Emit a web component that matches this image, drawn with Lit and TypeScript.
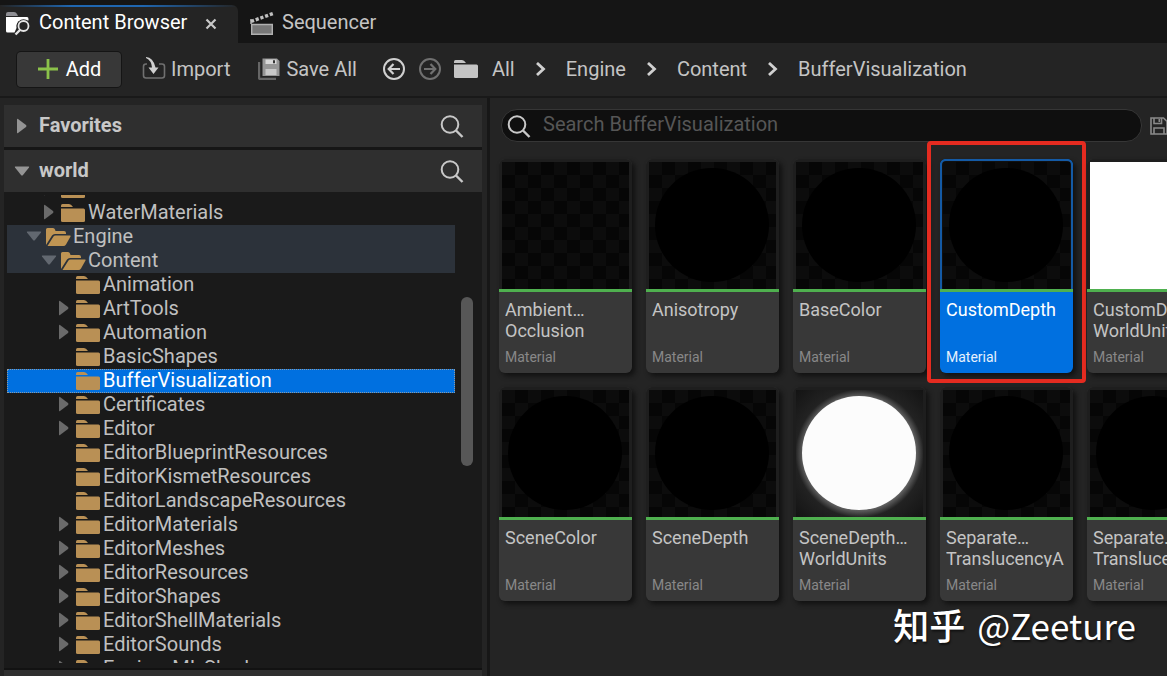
import { LitElement, html, css, svg, nothing } from "lit";
import { customElement, property } from "lit/decorators.js";
import { classMap } from "lit/directives/class-map.js";
import { styleMap } from "lit/directives/style-map.js";

type TreeNode = { name: string; level: number; arrow?: "open" | "closed"; state?: "path" | "selected" };
type Asset = { lines: string[]; thumb: "empty" | "black" | "glow" | "white"; selected?: boolean };

const TREE: TreeNode[] = [
  { name: "Water", level: 2, arrow: "closed" },
  { name: "WaterMaterials", level: 2, arrow: "closed" },
  { name: "Engine", level: 1, arrow: "open", state: "path" },
  { name: "Content", level: 2, arrow: "open", state: "path" },
  { name: "Animation", level: 3 },
  { name: "ArtTools", level: 3, arrow: "closed" },
  { name: "Automation", level: 3, arrow: "closed" },
  { name: "BasicShapes", level: 3 },
  { name: "BufferVisualization", level: 3, state: "selected" },
  { name: "Certificates", level: 3, arrow: "closed" },
  { name: "Editor", level: 3, arrow: "closed" },
  { name: "EditorBlueprintResources", level: 3 },
  { name: "EditorKismetResources", level: 3 },
  { name: "EditorLandscapeResources", level: 3 },
  { name: "EditorMaterials", level: 3, arrow: "closed" },
  { name: "EditorMeshes", level: 3, arrow: "closed" },
  { name: "EditorResources", level: 3, arrow: "closed" },
  { name: "EditorShapes", level: 3, arrow: "closed" },
  { name: "EditorShellMaterials", level: 3, arrow: "closed" },
  { name: "EditorSounds", level: 3, arrow: "closed" },
  { name: "Engine_MI_Shaders", level: 3, arrow: "closed" },
];

const ASSETS: Asset[] = [
  { lines: ["Ambient…", "Occlusion"], thumb: "empty" },
  { lines: ["Anisotropy"], thumb: "black" },
  { lines: ["BaseColor"], thumb: "black" },
  { lines: ["CustomDepth"], thumb: "black", selected: true },
  { lines: ["CustomDepth…", "WorldUnits"], thumb: "white" },
  { lines: ["SceneColor"], thumb: "black" },
  { lines: ["SceneDepth"], thumb: "black" },
  { lines: ["SceneDepth…", "WorldUnits"], thumb: "glow" },
  { lines: ["Separate…", "TranslucencyA"], thumb: "black" },
  { lines: ["Separate…", "TranslucencyR"], thumb: "black" },
];

const icon = (w: number, h: number, body: unknown) =>
  html`<svg width=${w} height=${h} viewBox="0 0 ${w} ${h}" fill="none" aria-hidden="true">${body}</svg>`;

const searchIcon = () =>
  icon(24, 24, svg`<circle cx="10" cy="10.500" r="8.300" stroke="#c8c8c8" stroke-width="2"/><path d="M16 16.500 22.500 23" stroke="#c8c8c8" stroke-width="2.400"/>`);

const arrowRight = (fill: string) =>
  icon(16, 16, svg`<path d="M3 1.500Q3 .3 4 1L12 7Q13 8 12 9L4 15Q3 15.700 3 14.500Z" fill=${fill}/>`);
const arrowDown = (fill: string) =>
  icon(16, 16, svg`<path d="M1.500 3.500H14.500Q15.700 3.500 15 4.600L9 12Q8 13.200 7 12L1 4.600Q.3 3.500 1.500 3.500Z" fill=${fill}/>`);

const folder = (fill: string) =>
  icon(24, 18, svg`<path d="M0 3V1.500Q0 0 1.500 0H8Q10 0 12 3Z" fill=${fill}/><path d="M0 4.500H22.500Q24 4.500 24 6V16.500Q24 18 22.500 18H1.500Q0 18 0 16.500Z" fill=${fill}/>`);
const folderOpen = () =>
  icon(25, 18, svg`<path d="M0 17V1.500Q0 0 1.500 0H7Q8.500 0 9 1.500L9.500 3H18Q20 3 20 5V6H9Q7 6 6 7.500Z" fill="#c09553"/><path d="M1.500 18 7.500 8.500Q8 7.500 9.500 7.500H24Q25 7.500 24.500 8.500L20 16.500Q19 18 17.500 18Z" fill="#c09553"/>`);

const tabFolder = () =>
  icon(26, 24, svg`<path d="M1 4V2Q1 0 3 0H9Q11 0 12 2L13 4Z" fill="#8e8e93"/><path d="M1 5H22Q23.500 5 23.500 7V8.500H16Q10.500 10 11.500 16L9.500 20.500H2.500Q1 20.500 1 19Z" fill="#fff"/><circle cx="18.500" cy="14" r="6.800" fill="#242424"/><circle cx="18.500" cy="14" r="5" stroke="#e4e4e4" stroke-width="1.800"/><path d="M15 18 10.500 22.500" stroke="#e4e4e4" stroke-width="2.400"/>`);
const clapper = () =>
  icon(24, 24, svg`<path d="M1.700 12.500H22.300V22.300H1.700Z" fill="#777" stroke="#b0b0b0" stroke-width="1.400"/><path d="M1 9.500 23 1.500" stroke="#c0c0c0" stroke-width="3.400" stroke-dasharray="3.200 1.800"/><path d="M1 7V12" stroke="#c0c0c0" stroke-width="1.400"/>`);
const plus = () => icon(22, 22, svg`<path d="M11 1V21M1 11H21" stroke="#8bc24a" stroke-width="2.800"/>`);
const importIcon = () =>
  icon(24, 24, svg`<path d="M5 7H4Q1.500 7 1.500 9.500V18.500Q1.500 21 4 21H20Q22.500 21 22.500 18.500V9.500Q22.500 7 20 7H17" stroke="#707070" stroke-width="1.600"/><path d="M4 0Q11 0 13.500 10.500H16.500L11.500 17 6.500 10.500H10Q9.500 3.500 4 1Z" fill="#d0d0d0"/>`);
const saveAll = () =>
  icon(22, 22, svg`<path d="M1 4V19.500Q1 21 2.500 21H18" stroke="#666" stroke-width="2.400"/><path d="M4.500 0.500H19L21.500 3V18H4.500Z" fill="#969696"/><path d="M7.500 1.500H18.500V6H7.500Z" fill="#d8d8d8"/><path d="M15 2.300H17V5.200H15Z" fill="#333"/><path d="M7.500 11H18.500V17H7.500Z" fill="#c8c8c8"/>`);
const navIcon = (stroke: string, back: boolean) =>
  icon(24, 24, svg`<circle cx="12" cy="12" r="10" stroke=${stroke} stroke-width="2"/><path d=${back ? "M18 12H7M11.500 7 6.700 12 11.500 17" : "M6 12H17M12.500 7 17.300 12 12.500 17"} stroke=${stroke} stroke-width="2.200"/>`);
const chevron = () => icon(11, 14, svg`<path d="M2 1 8.500 7 2 13" stroke="#d0d0d0" stroke-width="2.800"/>`);
const closeIcon = () => icon(12, 12, svg`<path d="M1.500 1.500 10.500 10.500M10.500 1.500 1.500 10.500" stroke="#c8c8c8" stroke-width="2.200"/>`);
const saveOutline = () =>
  icon(18, 18, svg`<path d="M1 1H13.500L17 4.500V17H1Z" stroke="#8a8a8a" stroke-width="1.600"/><path d="M4 1V6.500H11.500V1M4 17V11H14V17" stroke="#8a8a8a" stroke-width="1.600"/><path d="M8.500 2H10V5H8.500Z" fill="#8a8a8a"/>`);

const reset = css`
  * { box-sizing: border-box; }
  button {
    font: inherit; color: inherit; background: none; border: 0; margin: 0; padding: 0;
    text-align: left; cursor: pointer;
  }
  svg { display: block; flex: none; }
`;

@customElement("source-tree")
export class SourceTree extends LitElement {
  static styles = [reset, css`
    :host { display: flex; flex-direction: column; min-height: 0; padding: 7px 5px 0 4px; background: #242424; }
    .header {
      display: flex; align-items: center; gap: 9px; flex: none; height: 42px;
      padding: 0 18px 0 10px; background: #2f2f2f; color: #c8c8c8; font-weight: 700;
    }
    .header + .header { margin-top: 3px; }
    .heading { display: flex; align-items: center; gap: 9px; flex: 1; line-height: 24px; }
    .title { padding-bottom: 2px; }
    .headers { background: #161616; flex: none; }
    .body {
      display: flex; flex: 1; min-height: 0; gap: 6px; padding: 3px 9px 5px 3px;
      background: #1a1a1a; border-bottom: 2px solid #121212;
    }
    .view { flex: 1; min-width: 0; overflow: hidden; }
    .list { list-style: none; margin: -18px 0 0; padding: 0; }
    .row { display: flex; align-items: center; width: 100%; height: 24px; padding-bottom: 2px; line-height: 22px; white-space: nowrap; color: #c0c0c0; }
    .row.path { background: #2c323a; }
    .row.selected { background: #0070e0; color: #fff; outline: 1px dotted #8d9aa5; outline-offset: -1px; }
    .arrow { width: 16px; margin-right: 4px; }
    .label { margin-left: 3px; }
    .folder { width: 24px; padding-top: 2px; }
    .track { width: 12px; padding-top: 102px; flex: none; }
    .thumb { height: 169px; border-radius: 6px; background: #575757; }
    .footer { flex: none; height: 6px; background: #2f2f2f; }
  `];

  row(n: TreeNode) {
    return html`<li>
      <button class=${classMap({ row: true, path: n.state === "path", selected: n.state === "selected" })}
        style=${styleMap({ paddingLeft: `${4 + n.level * 15}px` })}>
        <span class="arrow">${n.arrow === "open" ? arrowDown("#626870") : n.arrow === "closed" ? arrowRight("#6a6a6a") : nothing}</span>
        <span class="folder">${n.arrow === "open" ? folderOpen() : folder("#b99055")}</span>
        <span class="label">${n.name}</span>
      </button>
    </li>`;
  }

  render() {
    return html`
      <div class="headers">
        <div class="header">
          <button class="heading">${arrowRight("#949494")}<span class="title">Favorites</span></button>
          <button aria-label="Search favorites">${searchIcon()}</button>
        </div>
        <div class="header">
          <button class="heading">${arrowDown("#949494")}<span class="title">world</span></button>
          <button aria-label="Search world">${searchIcon()}</button>
        </div>
      </div>
      <div class="body">
        <div class="view"><ul class="list">${TREE.map((n) => this.row(n))}</ul></div>
        <div class="track"><div class="thumb"></div></div>
      </div>
      <div class="footer"></div>
    `;
  }
}

@customElement("asset-card")
export class AssetCard extends LitElement {
  @property({ attribute: false }) asset!: Asset;

  static styles = [reset, css`
    :host { display: block; position: relative; }
    .card {
      display: flex; flex-direction: column; align-items: stretch; justify-content: flex-start;
      width: 100%; height: 214px; border-radius: 6px; overflow: hidden;
      background: #383838; color: #c4c4c4; box-shadow: 3px 3px 5px #111;
    }
    .thumb { height: 130px; padding: 3px 3px 0; background: #1e1e1e; }
    .picture {
      display: flex; align-items: center; justify-content: center; height: 127px; padding: 0 1px 1px 0;
      background: repeating-conic-gradient(#060606 0 25%, #0c0c0c 0 50%) 0 0 / 26px 26px;
    }
    .white .picture { background: #fff; }
    .ball { width: 114px; height: 114px; border-radius: 50%; background: #000; }
    .empty .ball, .white .ball { display: none; }
    .glow .picture { background: radial-gradient(circle, #666 56px, #222 64px, #131313 90px); }
    .glow .ball { background: #fcfcfc; }
    .info { border-top: 3px solid #4fb04f; padding: 7px 6px 0; }
    .name { height: 40px; font-size: 18px; line-height: 21px; overflow: hidden; white-space: nowrap; }
    .line { display: block; }
    .kind { margin-top: 8px; font-size: 14px; line-height: 20px; color: #888; }
    .selected { background: #0070e0; color: #fff; }
    .selected .thumb { border: 2px solid #145aa5; border-bottom: 0; border-radius: 6px 6px 0 0; padding: 1px 1px 0; background: #101010; }
    .selected .kind { color: #e6f1fc; }
    .callout {
      position: absolute; inset: -18px -13px -10px; border: 4px solid #e52b20; border-radius: 4px;
      pointer-events: none;
    }
  `];

  render() {
    const a = this.asset;
    return html`
      <button class=${classMap({ card: true, [a.thumb]: true, selected: !!a.selected })}>
        <div class="thumb"><div class="picture"><div class="ball"></div></div></div>
        <div class="info">
          <div class="name">${a.lines.map((l) => html`<span class="line">${l}</span>`)}</div>
          <div class="kind">Material</div>
        </div>
      </button>
      ${a.selected ? html`<div class="callout"></div>` : nothing}
    `;
  }
}

@customElement("app-root")
export class AppRoot extends LitElement {
  static styles = [reset, css`
    :host {
      display: flex; flex-direction: column; height: 100vh; overflow: hidden; position: relative;
      background: #242424; color: #c4c4c4; font: 20px/24px Roboto, "Noto Sans CJK SC", sans-serif;
    }
    .tabs { display: flex; flex: none; height: 43px; padding-top: 5px; background: #151515; }
    .tab { display: flex; align-items: center; height: 38px; padding: 0 12px 4px; gap: 8px; }
    .tab svg { margin-top: 3px; }
    .tab.active {
      width: 238px; padding: 0 21px 4px 5px; color: #fff; background: #242424; border-radius: 0 6px 0 0;
      background-image: linear-gradient(90deg, #242424, #1f66b0 30%, #1f66b0 60%, #242424);
      background-size: 100% 2px; background-repeat: no-repeat;
    }
    .tab-title { flex: 1; }
    .toolbar {
      display: flex; align-items: center; flex: none; height: 55px; padding: 0 17px 1px;
      border-bottom: 2px solid #191919; white-space: nowrap;
    }
    .tool { display: flex; align-items: center; gap: 5px; }
    .add {
      width: 104px; height: 35px; justify-content: center; margin-right: 21px; color: #fff;
      background: #383838; border-radius: 4px; box-shadow: 0 0 0 1px #151515; gap: 7px;
    }
    .import { margin-right: 28px; }
    .save { margin-right: 25px; gap: 6px; }
    .nav { margin-right: 12px; }
    .crumbs { display: flex; align-items: center; gap: 20px; }
    .home { margin-right: 14px; }
    .main { display: flex; flex: 1; min-height: 0; }
    .side { flex: none; width: 487px; }
    .content { flex: 1; min-width: 0; border-left: 3px solid #171717; padding: 11px 0 0 9px; overflow: hidden; }
    .searchbar { display: flex; align-items: center; gap: 8px; padding-left: 2px; }
    .search {
      display: flex; align-items: center; flex: 1; gap: 12px; height: 33px; padding: 0 5px;
      background: #0f0f0f; border: 1px solid #363636; border-radius: 16px; min-width: 0;
    }
    .input {
      flex: 1; min-width: 0; height: 30px; padding: 0 0 4px; border: 0; outline: 0; background: none;
      font: inherit; color: #c4c4c4;
    }
    .input::placeholder { color: #565656; opacity: 1; }
    .icon-box { width: 17px; flex: none; }
    .grid { display: grid; grid-template-columns: repeat(5, 133px); gap: 14px; padding-top: 17px; }
    .watermark {
      position: absolute; right: 31px; bottom: 26px; display: flex; gap: 12px; align-items: baseline; color: #fff;
      font: 500 36px/50px "Noto Sans CJK SC", sans-serif;
      text-shadow: 1px 2px 2px #0008; pointer-events: none; white-space: nowrap;
    }
    .handle { font-size: 35px; font-weight: 400; }
  `];

  render() {
    return html`
      <div class="tabs">
        <div class="tab active">${tabFolder()}<span class="tab-title">Content Browser</span>
          <button aria-label="Close tab">${closeIcon()}</button></div>
        <button class="tab">${clapper()}<span>Sequencer</span></button>
      </div>
      <div class="toolbar">
        <button class="tool add">${plus()}Add</button>
        <button class="tool import">${importIcon()}Import</button>
        <button class="tool save">${saveAll()}Save All</button>
        <button class="nav" aria-label="Back">${navIcon("#d0d0d0", true)}</button>
        <button class="nav" aria-label="Forward">${navIcon("#707070", false)}</button>
        <button class="home" aria-label="Choose a path">${folder("#c4c4c4")}</button>
        <nav class="crumbs">
          <button>All</button>${chevron()}<button>Engine</button>${chevron()}<button>Content</button>${chevron()}<button>BufferVisualization</button>
        </nav>
      </div>
      <div class="main">
        <source-tree class="side"></source-tree>
        <div class="content">
          <div class="searchbar">
            <label class="search">${searchIcon()}<input class="input" type="text" aria-label="Search" placeholder="Search BufferVisualization" /></label>
            <button class="icon-box" aria-label="Save search">${saveOutline()}</button>
          </div>
          <div class="grid">${ASSETS.map((a) => html`<asset-card .asset=${a}></asset-card>`)}</div>
        </div>
      </div>
      <div class="watermark"><span>知乎</span><span class="handle">@Zeeture</span></div>
    `;
  }
}
